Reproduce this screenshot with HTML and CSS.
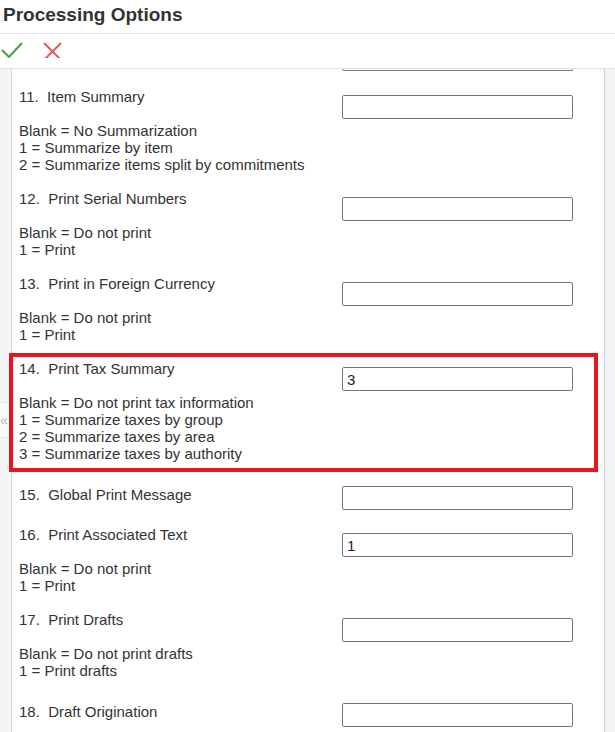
FILE: index.html
```html
<!DOCTYPE html>
<html>
<head>
<meta charset="utf-8">
<title>Processing Options</title>
<link rel="stylesheet" href="styles.css">
</head>
<body>
<div class="page">
  <header class="header"><h1 class="title">Processing Options</h1></header>
  <div class="toolbar">
    <svg class="icon icon-ok" width="24" height="24" viewBox="0 0 24 24"><path d="M2 16 L9 23 L22 9" fill="none" stroke="#46a046" stroke-width="2"/></svg>
    <svg class="icon icon-cancel" width="24" height="24" viewBox="0 0 24 24"><path d="M3 9 L20 26 M20 9 L3 26" fill="none" stroke="#e55a5a" stroke-width="2"/></svg>
  </div>
  <div class="main">
    <div class="side side-left"><div class="collapse-tab">«</div></div>
    <div class="content">
      <div class="stub-row"><div class="input-stub"></div></div>

      <div class="item">
        <div class="label">11.&nbsp; Item Summary</div>
        <input class="field" type="text" value="">
        <div class="desc">Blank = No Summarization<br>1 = Summarize by item<br>2 = Summarize items split by commitments</div>
      </div>

      <div class="item">
        <div class="label">12.&nbsp; Print Serial Numbers</div>
        <input class="field" type="text" value="">
        <div class="desc">Blank = Do not print<br>1 = Print</div>
      </div>

      <div class="item">
        <div class="label">13.&nbsp; Print in Foreign Currency</div>
        <input class="field" type="text" value="">
        <div class="desc">Blank = Do not print<br>1 = Print</div>
      </div>

      <div class="highlight">
        <div class="item item-boxed">
          <div class="label">14.&nbsp; Print Tax Summary</div>
          <input class="field" type="text" value="3">
          <div class="desc">Blank = Do not print tax information<br>1 = Summarize taxes by group<br>2 = Summarize taxes by area<br>3 = Summarize taxes by authority</div>
        </div>
      </div>

      <div class="item item-single">
        <div class="label">15.&nbsp; Global Print Message</div>
        <input class="field" type="text" value="">
      </div>

      <div class="item">
        <div class="label">16.&nbsp; Print Associated Text</div>
        <input class="field" type="text" value="1">
        <div class="desc">Blank = Do not print<br>1 = Print</div>
      </div>

      <div class="item">
        <div class="label">17.&nbsp; Print Drafts</div>
        <input class="field" type="text" value="">
        <div class="desc">Blank = Do not print drafts<br>1 = Print drafts</div>
      </div>

      <div class="item item-single">
        <div class="label">18.&nbsp; Draft Origination</div>
        <input class="field" type="text" value="">
      </div>
    </div>
    <div class="side side-right"></div>
  </div>
</div>
</body>
</html>
```
FILE: styles.css
```css
* { box-sizing: border-box; }
html, body {
  margin: 0;
  padding: 0;
  background: #fff;
}
body {
  font-family: Arial, "Liberation Sans", sans-serif;
  color: #333;
  width: 615px;
  height: 732px;
  overflow: hidden;
}
.page {
  display: flex;
  flex-direction: column;
  height: 732px;
}
.header {
  height: 34px;
  border-bottom: 1px solid #dfe2e6;
  padding: 3px 0 0 3px;
}
.title {
  margin: 0;
  font-size: 19px;
  line-height: 23px;
  font-weight: bold;
  color: #333;
}
.toolbar {
  height: 35px;
  border-bottom: 1px solid #dfe2e6;
  display: flex;
  align-items: flex-start;
  gap: 17px;
}
.icon { display: block; }
.main {
  flex: 1;
  display: flex;
  min-height: 0;
}
.side {
  flex: none;
  background: #f4f5f7;
}
.side-left {
  width: 12px;
  border-right: 1px solid #d3d8de;
  position: relative;
}
.side-right {
  width: 11px;
  border-left: 1px solid #c5d0dc;
}
.collapse-tab {
  position: absolute;
  left: 0;
  top: 333px;
  width: 11px;
  height: 36px;
  background: #f8f9fa;
  border-top: 1px solid #e2e5e9;
  border-bottom: 1px solid #e2e5e9;
  color: #b5b8bc;
  font-size: 14px;
  line-height: 34px;
  overflow: hidden;
}
.content {
  flex: 1;
  min-width: 0;
  padding: 0 31px 0 7px;
}
.stub-row {
  display: flex;
  justify-content: flex-end;
  height: 17px;
}
.input-stub {
  width: 231px;
  height: 2px;
  border: 1px solid #767676;
  border-top: 0;
  border-radius: 0 0 2px 2px;
}
.item {
  display: grid;
  grid-template-columns: 1fr 231px;
  align-items: start;
  padding-bottom: 15px;
  font-size: 15px;
  line-height: 17px;
}
.label {
  grid-column: 1;
  grid-row: 1;
  padding-top: 2px;
}
.item-single { padding-bottom: 14px; }
.item-single .label { padding-top: 9px; }
.field {
  grid-column: 2;
  grid-row: 1;
  margin: 9px 0 0 0;
  width: 231px;
  height: 24px;
  border: 1px solid #767676;
  border-radius: 2px;
  padding: 0 4px;
  font-family: Arial, "Liberation Sans", sans-serif;
  font-size: 15px;
  color: #222;
  background: #fff;
  outline: none;
}
.desc {
  grid-column: 1 / span 2;
  grid-row: 2;
  margin-top: 3px;
}
.highlight {
  position: relative;
  margin: -5px -25px 5px -10px;
  border: 4px solid #e8141e;
  padding: 1px 21px 6px 6px;
}
.item-boxed { padding-bottom: 0; }
```
